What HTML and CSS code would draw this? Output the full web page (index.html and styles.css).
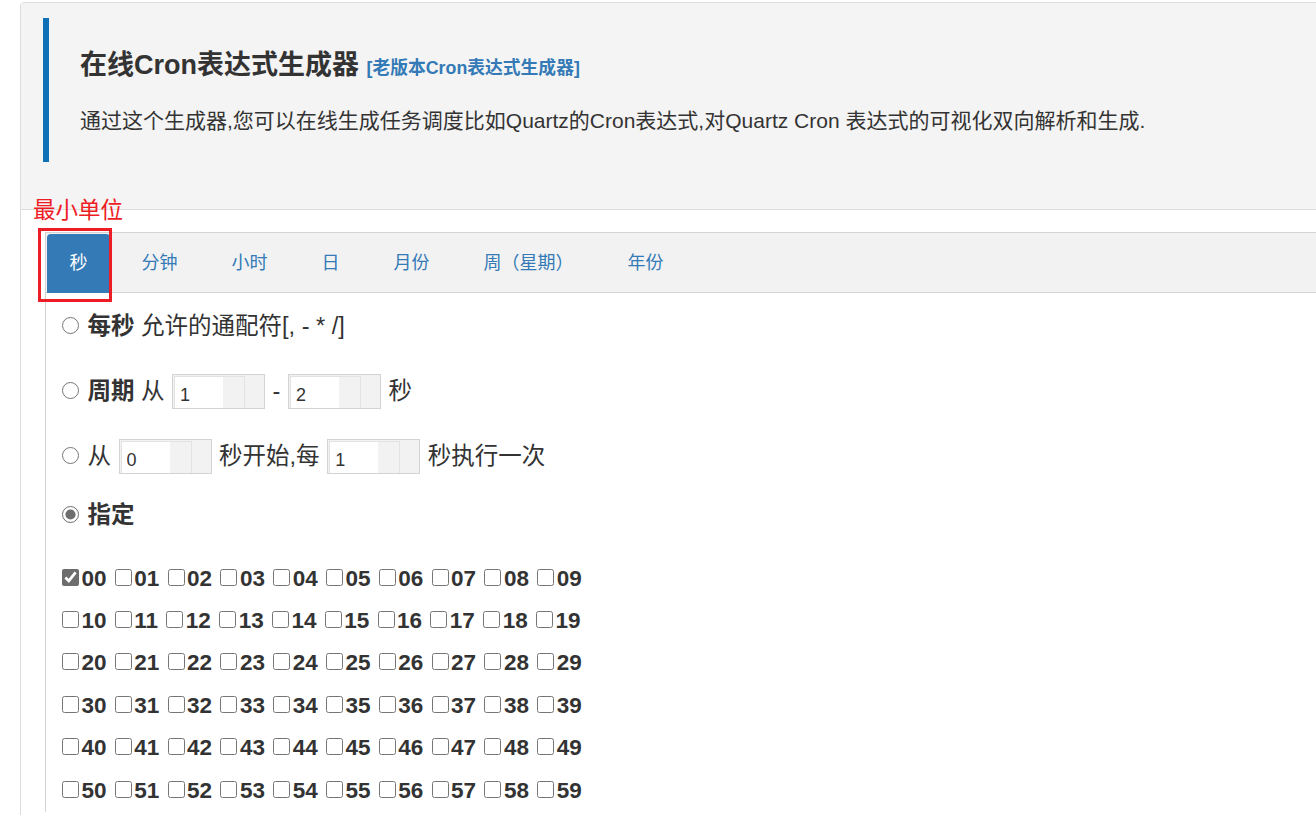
FILE: index.html
```html
<!DOCTYPE html>
<html lang="zh">
<head>
    <meta charset="UTF-8">
    <meta name="viewport" content="width=device-width, initial-scale=1.0">
    <title>在线Cron表达式生成器</title>
    <link rel="stylesheet" href="styles.css">
</head>
<body>
    <div class="page">
        <div class="box">
            <div class="box-head">
                <div class="callout">
                    <h3>在线Cron表达式生成器 <a href="#">[老版本Cron表达式生成器]</a></h3>
                    <p>通过这个生成器,您可以在线生成任务调度比如Quartz的Cron表达式,对Quartz Cron 表达式的可视化双向解析和生成.</p>
                </div>
            </div>
            <div class="box-body">
                <div class="note">最小单位</div>
                <div class="mark"></div>
                <div class="tabs">
                    <ul class="tab-bar">
                        <li class="tab active">秒</li>
                        <li class="tab">分钟</li>
                        <li class="tab">小时</li>
                        <li class="tab">日</li>
                        <li class="tab">月份</li>
                        <li class="tab">周（星期）</li>
                        <li class="tab">年份</li>
                    </ul>
                    <div class="tab-panel">
                        <div class="opt">
                            <input type="radio" name="second"> <b>每秒</b> 允许的通配符[, - * /]
                        </div>
                        <div class="opt">
                            <input type="radio" name="second"> <b>周期</b> 从
                            <span class="spin"><input class="spin-text" value="1"></span>
                            -
                            <span class="spin"><input class="spin-text" value="2"></span>
                            秒
                        </div>
                        <div class="opt">
                            <input type="radio" name="second"> 从
                            <span class="spin"><input class="spin-text" value="0"></span>
                            秒开始,每
                            <span class="spin"><input class="spin-text" value="1"></span>
                            秒执行一次
                        </div>
                        <div class="opt pick">
                            <input type="radio" name="second" checked> <b>指定</b>
                        </div>
                        <div class="nums">
                            <div class="num-row">
                                <label><input type="checkbox" checked>00</label>
                                <label><input type="checkbox">01</label>
                                <label><input type="checkbox">02</label>
                                <label><input type="checkbox">03</label>
                                <label><input type="checkbox">04</label>
                                <label><input type="checkbox">05</label>
                                <label><input type="checkbox">06</label>
                                <label><input type="checkbox">07</label>
                                <label><input type="checkbox">08</label>
                                <label><input type="checkbox">09</label>
                            </div>
                            <div class="num-row">
                                <label><input type="checkbox">10</label>
                                <label><input type="checkbox">11</label>
                                <label><input type="checkbox">12</label>
                                <label><input type="checkbox">13</label>
                                <label><input type="checkbox">14</label>
                                <label><input type="checkbox">15</label>
                                <label><input type="checkbox">16</label>
                                <label><input type="checkbox">17</label>
                                <label><input type="checkbox">18</label>
                                <label><input type="checkbox">19</label>
                            </div>
                            <div class="num-row">
                                <label><input type="checkbox">20</label>
                                <label><input type="checkbox">21</label>
                                <label><input type="checkbox">22</label>
                                <label><input type="checkbox">23</label>
                                <label><input type="checkbox">24</label>
                                <label><input type="checkbox">25</label>
                                <label><input type="checkbox">26</label>
                                <label><input type="checkbox">27</label>
                                <label><input type="checkbox">28</label>
                                <label><input type="checkbox">29</label>
                            </div>
                            <div class="num-row">
                                <label><input type="checkbox">30</label>
                                <label><input type="checkbox">31</label>
                                <label><input type="checkbox">32</label>
                                <label><input type="checkbox">33</label>
                                <label><input type="checkbox">34</label>
                                <label><input type="checkbox">35</label>
                                <label><input type="checkbox">36</label>
                                <label><input type="checkbox">37</label>
                                <label><input type="checkbox">38</label>
                                <label><input type="checkbox">39</label>
                            </div>
                            <div class="num-row">
                                <label><input type="checkbox">40</label>
                                <label><input type="checkbox">41</label>
                                <label><input type="checkbox">42</label>
                                <label><input type="checkbox">43</label>
                                <label><input type="checkbox">44</label>
                                <label><input type="checkbox">45</label>
                                <label><input type="checkbox">46</label>
                                <label><input type="checkbox">47</label>
                                <label><input type="checkbox">48</label>
                                <label><input type="checkbox">49</label>
                            </div>
                            <div class="num-row">
                                <label><input type="checkbox">50</label>
                                <label><input type="checkbox">51</label>
                                <label><input type="checkbox">52</label>
                                <label><input type="checkbox">53</label>
                                <label><input type="checkbox">54</label>
                                <label><input type="checkbox">55</label>
                                <label><input type="checkbox">56</label>
                                <label><input type="checkbox">57</label>
                                <label><input type="checkbox">58</label>
                                <label><input type="checkbox">59</label>
                            </div>
                        </div>
                    </div>
                </div>
            </div>
        </div>
    </div>
</body>
</html>
```

FILE: styles.css
```css
html,
body{
    margin: 0;
    overflow: hidden;
}
body{
    font-family: "Liberation Sans", "Noto Sans CJK SC", sans-serif;
    color: #333;
    background: #fff;
}
.page{
    padding: 2px 0 0 20px;
}
.box{
    width: 1400px;
    min-height: 900px;
    border: 1px solid #ddd;
    border-radius: 4px;
}
.box-head{
    background: #f4f4f4;
    border-bottom: 1px solid #ddd;
    border-radius: 4px 4px 0 0;
    padding: 15px 0 47px 22px;
}
.callout{
    border-left: 6px solid #0f70b7;
    padding: 29px 0 25px 31px;
}
.callout h3{
    margin: 0;
    font-size: 27px;
    line-height: 36px;
    font-weight: bold;
}
.callout h3 a{
    font-size: 17.8px;
    line-height: 1;
    color: #337ab7;
    text-decoration: none;
}
.callout p{
    margin: 22px 0 0;
    font-size: 21px;
    line-height: 32px;
}
.box-body{
    position: relative;
    padding: 22px 0 0 24px;
}
.note{
    position: absolute;
    left: 12px;
    top: -12px;
    font-size: 22.5px;
    line-height: 26px;
    color: #ee1c25;
}
.mark{
    position: absolute;
    left: 17px;
    top: 18px;
    width: 74px;
    height: 74px;
    box-sizing: border-box;
    border: 3px solid #ee1c25;
}
.tabs{
    border-left: 1px solid #d4d4d4;
}
.tab-bar{
    display: flex;
    list-style: none;
    margin: 0;
    padding: 1px 0 0 1px;
    background: #f2f2f2;
    border-top: 1px solid #d4d4d4;
    border-bottom: 1px solid #d4d4d4;
}
.tab{
    height: 59px;
    line-height: 59px;
    padding: 0 22.5px;
    margin: 0 9px -1px 0;
    font-size: 18px;
    color: #337ab7;
    border-radius: 4px 4px 0 0;
}
.tab.active{
    background: #337ab7;
    color: #fff;
}
.tab-panel{
    padding: 15.5px 0 0 14px;
}
.opt{
    height: 35px;
    line-height: 35px;
    font-size: 23.5px;
    white-space: nowrap;
}
.opt + .opt{
    margin-top: 30px;
}
.opt.pick{
    margin-top: 24px;
}
.opt input[type="radio"]{
    width: 17px;
    height: 17px;
    margin: 0 2px 1px 2px;
    accent-color: #6d6d6d;
}
.spin{
    display: inline-flex;
    vertical-align: top;
    width: 93px;
    height: 35px;
    box-sizing: border-box;
    margin: 0 1px;
    border: 1px solid #d3d3d3;
    background: #f2f2f2;
}
.spin-text{
    width: 71px;
    height: 32px;
    box-sizing: border-box;
    margin: 1px 0 0 1px;
    padding: 6px 0 0 5px;
    border: 1px solid #e2e2e2;
    border-bottom: 0;
    background: linear-gradient(to right, #fff 48px, #f2f2f2 48px);
    font: 18px/20px "Liberation Sans", sans-serif;
    color: #333;
    outline: none;
}
.nums{
    margin-top: 25px;
    font-size: 22.5px;
    line-height: 42.4px;
    font-weight: bold;
    white-space: nowrap;
}
.nums input{
    width: 17px;
    height: 17px;
    margin: 0 2.5px 2px 2px;
    accent-color: #6d6d6d;
}
```
